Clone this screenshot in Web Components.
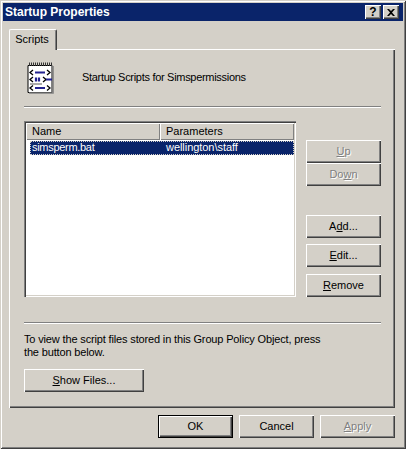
<!DOCTYPE html>
<html><head><meta charset="utf-8"><style>
html,body{margin:0;padding:0;background:#d4d0c8}
body{font:11px/13px "Liberation Sans",Arial,sans-serif;color:#000}
u{text-decoration:underline}
</style></head><body>
<win-dialog>
  <win-titlebar slot="title">Startup Properties</win-titlebar>
  <win-tabs label="Scripts">
    <win-header>Startup Scripts for Simspermissions</win-header>
    <win-sep style="margin-top:12px"></win-sep>
    <div style="display:grid;grid-template-columns:272px 75px;column-gap:10px;margin-top:13px;height:176px">
      <win-list></win-list>
      <div style="display:flex;flex-direction:column;padding-top:19px">
        <win-button disabled><u>U</u>p</win-button>
        <win-button disabled>Do<u>w</u>n</win-button>
        <win-button style="margin-top:29px">A<u>d</u>d...</win-button>
        <win-button style="margin-top:6px"><u>E</u>dit...</win-button>
        <win-button style="margin-top:7px"><u>R</u>emove</win-button>
      </div>
    </div>
    <win-sep style="margin-top:25px"></win-sep>
    <div style="margin-top:9px;line-height:13px;letter-spacing:-.15px">To view the script files stored in this Group Policy Object, press<br>the button below.</div>
    <win-button style="width:120px;margin-top:10px">
      <u>S</u>how Files...</win-button>
  </win-tabs>
  <win-footer>
    <win-button default>OK</win-button>
    <win-button>Cancel</win-button>
    <win-button disabled><u>A</u>pply</win-button>
  </win-footer>
</win-dialog>
<script>
function def(name, css, html){
  customElements.define(name, class extends HTMLElement{
    constructor(){super();const r=this.attachShadow({mode:"open"});
      r.innerHTML=`<style>${css}</style>${typeof html==="function"?html(this):html}`;}
  });
}
def("win-dialog",`:host{display:flex;flex-direction:column;box-sizing:border-box;width:406px;height:449px;padding:3px;background:#d4d0c8;
  box-shadow:inset 1px 1px 0 #d4d0c8,inset -1px -1px 0 #404040,inset 2px 2px 0 #fff,inset -2px -2px 0 #808080}`,
  `<slot name="title"></slot><slot></slot>`);
def("win-titlebar",`:host{display:flex;align-items:center;justify-content:space-between;box-sizing:border-box;height:18px;background:#0a246a;color:#fff;padding:0 4px 0 2px}
  .t{font:bold 12px/18px "Liberation Sans",Arial,sans-serif;white-space:nowrap}
  .b{display:flex;align-items:center}
  .c{box-sizing:border-box;width:16px;height:14px;background:#d4d0c8;color:#000;display:flex;align-items:center;justify-content:center;
    box-shadow:inset 1px 1px 0 #fff,inset -1px -1px 0 #404040,inset -2px -2px 0 #808080;font:bold 12px/14px "Liberation Sans",sans-serif}
  .c+.c{margin-left:2px}`,
  `<span class="t"><slot></slot></span><span class="b"><span class="c">?</span><span class="c"><svg width="8" height="7" viewBox="0 0 8 7"><path d="M0 0h2l2 2 2-2h2L5 3.5 8 7H6L4 5 2 7H0l3-3.5z" fill="#000"/></svg></span></span>`);
def("win-tabs",`:host{display:flex;flex-direction:column;margin:8px 8px 0 6px;height:379px}
  .tab{align-self:flex-start;box-sizing:border-box;width:48px;height:21px;margin-bottom:-1px;position:relative;z-index:1;background:#d4d0c8;border-radius:2px 2px 0 0;
    border-left:1px solid #fff;border-top:1px solid #fff;border-right:1px solid #404040;box-shadow:inset -1px 0 0 #808080;text-align:center;line-height:18px;padding-right:2px}
  .panel{box-sizing:border-box;height:360px;padding:13px 14px 0 15px;
    box-shadow:inset 1px 1px 0 #fff,inset -1px -1px 0 #404040,inset -2px -2px 0 #808080}`,
  el=>`<div class="tab">${el.getAttribute("label")}</div><div class="panel"><slot></slot></div>`);
def("win-header",`:host{display:flex;align-items:center;height:32px;padding-left:3px}
  svg{display:block;flex:none}
  span{margin-left:27px;letter-spacing:-.3px}`,
  `<svg width="28" height="33" viewBox="0 0 28 33">
    <path d="M1 4.5h24v27H1z" fill="#fff" stroke="#000"/>
    <path d="M26 5v27H2" fill="none" stroke="#808080" stroke-width="1.6"/>
    <path d="M2.5 1.5V5M4.5 1.5V5M6.5 1.5V5M8.5 1.5V5M10.5 1.5V5M12.5 1.5V5M14.5 1.5V5M16.5 1.5V5M18.5 1.5V5M20.5 1.5V5M22.5 1.5V5M24.5 1.5V5" stroke="#333" stroke-width="1"/>
    <g fill="none" stroke="#000" stroke-width="1.3">
      <path d="M6 9l-3 2.5 3 2.5M20 9l3 2.5-3 2.5"/>
      <path d="M6 16l-3 2.5 3 2.5M16 16l3 2.5-3 2.5"/>
      <path d="M6 24.5l-3 2.5 3 2.5M20 24.5l3 2.5-3 2.5"/>
    </g>
    <g stroke="#23238f" stroke-width="2">
      <path d="M8 11.5h10M19 18.5h6M8 27h10"/>
      <path d="M9 16.5v4M12 16.5v4" stroke-width="2.2"/>
    </g>
    <path d="M3 23h12" stroke="#555" stroke-width="1"/>
  </svg><span><slot></slot></span>`);
def("win-sep",`:host{display:block;height:2px;background:linear-gradient(#808080 50%,#fff 50%)}`,``);
def("win-button",`:host{display:flex;align-items:center;justify-content:center;box-sizing:border-box;width:75px;height:23px;flex:none;background:#d4d0c8;
    box-shadow:inset 1px 1px 0 #fff,inset -1px -1px 0 #404040,inset -2px -2px 0 #808080;cursor:default;white-space:nowrap}
  :host([disabled]){color:#808080;text-shadow:1px 1px 0 #fff}
  :host([default]){box-shadow:inset 0 0 0 1px #000,inset 2px 2px 0 #fff,inset -2px -2px 0 #404040,inset -3px -3px 0 #808080}`,
  `<span><slot></slot></span>`);
def("win-list",`:host{display:block;box-sizing:border-box;background:#fff;padding:2px 2px 0;height:176px;
    box-shadow:inset 1px 1px 0 #808080,inset 2px 2px 0 #404040,inset -1px -1px 0 #fff,inset -2px -2px 0 #d4d0c8}
  .h{display:grid;grid-template-columns:134px 134px;height:17px}
  .h div{box-sizing:border-box;background:#d4d0c8;padding-left:6px;line-height:17px;
    box-shadow:inset 1px 1px 0 #fff,inset -1px -1px 0 #808080}
  .r{display:grid;grid-template-columns:130px 134px;margin:1px 0 0 4px;height:14px;background:#0a246a;color:#fff;line-height:13px;outline:1px dotted #d4d0c8;outline-offset:-1px}
  .r div{padding-left:2px;letter-spacing:-.3px}.r div+div{padding-left:6px;letter-spacing:-.05px}`,
  `<div class="h"><div>Name</div><div>Parameters</div></div><div class="r"><div>simsperm.bat</div><div>wellington\\staff</div></div>`);
def("win-footer",`:host{display:flex;justify-content:flex-end;gap:6px;margin:7px 8px 0 0}`,`<slot></slot>`);
</script>
</body></html>
